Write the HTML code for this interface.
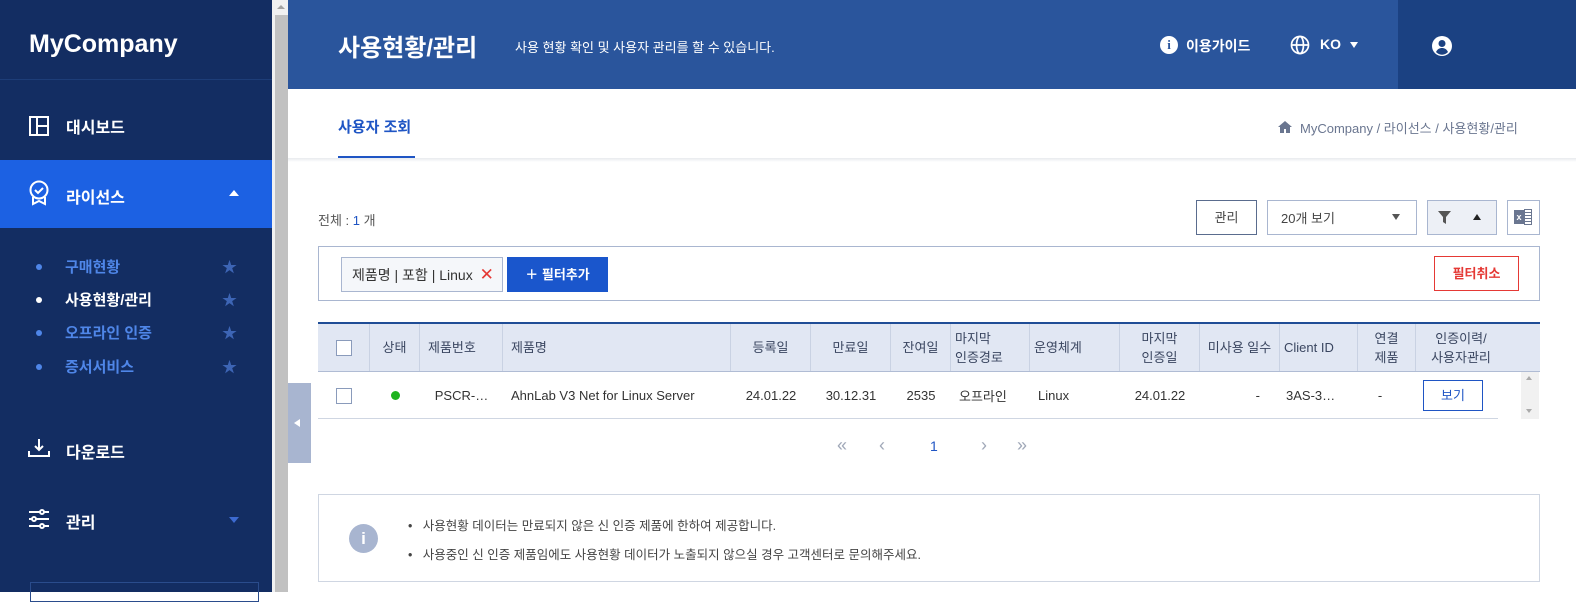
<!DOCTYPE html>
<html><head><meta charset="utf-8"><style>
*{box-sizing:border-box;margin:0;padding:0}
body{width:1576px;height:592px;overflow:hidden;position:relative;background:#fff;font-family:"Liberation Sans","Noto Sans CJK KR",sans-serif;color:#333}
.abs{position:absolute}
#side{left:0;top:0;width:272px;height:592px;background:#132d62}
.logo{left:29px;top:30px;font-size:25px;font-weight:bold;color:#fff}
.menu{color:#fff;font-size:16px;font-weight:bold}
.sub{font-size:15px;font-weight:bold;color:#4f86e8}
.dot{width:6px;height:6px;border-radius:50%;background:#4f86e8}
.star{color:#3d65b5;font-size:15px}
.th{position:absolute;top:0;height:47px;display:flex;align-items:center;justify-content:center;text-align:center;font-size:13px;color:#3a4660;line-height:19px;border-right:1px solid #c9d2e3}
.td{position:absolute;top:0;height:47px;display:flex;align-items:center;justify-content:center;font-size:13px;color:#333}
</style></head><body>
<div id="side" class="abs">
 <div class="abs logo">MyCompany</div>
 <div class="abs" style="left:0;top:79px;width:272px;height:1px;background:#1d3d78"></div>
 <svg class="abs" style="left:29px;top:116px" width="20" height="20" viewBox="0 0 20 20" fill="none" stroke="#fff" stroke-width="2"><rect x="1" y="1" width="18" height="18"/><path d="M8 1v18M8 10h11"/></svg>
 <div class="abs menu" style="left:66px;top:114px">대시보드</div>
 <div class="abs" style="left:0;top:160px;width:272px;height:68px;background:#1c61e3"></div>
 <svg class="abs" style="left:28px;top:180px" width="22" height="26" viewBox="0 0 22 26" fill="none" stroke="#fff" stroke-width="2"><circle cx="11" cy="10" r="8.5"/><path d="M7 10l3 3 5-5M5 17v7l6-3 6 3v-7"/></svg>
 <div class="abs menu" style="left:66px;top:184px">라이선스</div>
 <div class="abs" style="left:229px;top:190px;width:0;height:0;border-left:5px solid transparent;border-right:5px solid transparent;border-bottom:6px solid #fff"></div>
 <div class="abs dot" style="left:36px;top:264px"></div><div class="abs sub" style="left:65px;top:256px">구매현황</div><div class="abs star" style="left:222px;top:256px">★</div>
 <div class="abs dot" style="left:36px;top:297px;background:#fff"></div><div class="abs sub" style="left:65px;top:289px;color:#fff">사용현황/관리</div><div class="abs star" style="left:222px;top:289px">★</div>
 <div class="abs dot" style="left:36px;top:330px"></div><div class="abs sub" style="left:65px;top:322px">오프라인 인증</div><div class="abs star" style="left:222px;top:322px">★</div>
 <div class="abs dot" style="left:36px;top:364px"></div><div class="abs sub" style="left:65px;top:356px">증서서비스</div><div class="abs star" style="left:222px;top:356px">★</div>
 <svg class="abs" style="left:28px;top:438px" width="22" height="20" viewBox="0 0 22 20" fill="none" stroke="#fff" stroke-width="2"><path d="M11 1v11M7 8l4 4 4-4M1 13v5h20v-5"/></svg>
 <div class="abs menu" style="left:66px;top:439px">다운로드</div>
 <svg class="abs" style="left:28px;top:509px" width="22" height="20" viewBox="0 0 22 20" fill="none" stroke="#fff" stroke-width="2"><path d="M1 3h20M1 10h20M1 17h20"/><circle cx="14" cy="3" r="2" fill="#132d62"/><circle cx="6" cy="10" r="2" fill="#132d62"/><circle cx="14" cy="17" r="2" fill="#132d62"/></svg>
 <div class="abs menu" style="left:66px;top:509px">관리</div>
 <div class="abs" style="left:229px;top:517px;border-left:5px solid transparent;border-right:5px solid transparent;border-top:6px solid #3d6ad0"></div>
 <div class="abs" style="left:30px;top:582px;width:229px;height:20px;border:1px solid #2a4c8c"></div>
</div>
<div class="abs" style="left:272px;top:0;width:16px;height:592px;background:#f1f1f1"></div>
<div class="abs" style="left:275px;top:15px;width:13px;height:577px;background:#c1c1c1"></div>
<div class="abs" style="left:277px;top:5px;border-left:4px solid transparent;border-right:4px solid transparent;border-bottom:4px solid #a3a3a3"></div>
<div class="abs" style="left:288px;top:0;width:1110px;height:89px;background:#2a559c"></div>
<div class="abs" style="left:1398px;top:0;width:178px;height:89px;background:#1b4182"></div>
<div class="abs" style="left:338px;top:28px;font-size:24px;font-weight:bold;color:#fff">사용현황/관리</div>
<div class="abs" style="left:515px;top:37px;font-size:13px;color:#fff">사용 현황 확인 및 사용자 관리를 할 수 있습니다.</div>
<div class="abs" style="left:1160px;top:36px;width:18px;height:18px;border-radius:50%;background:#fff;color:#2a559c;font-size:13px;font-weight:bold;text-align:center;line-height:18px;font-family:'Liberation Serif',serif">i</div>
<div class="abs" style="left:1186px;top:36px;font-size:14px;font-weight:bold;color:#fff">이용가이드</div>
<svg class="abs" style="left:1290px;top:35px" width="20" height="20" viewBox="0 0 20 20" fill="none" stroke="#fff" stroke-width="1.7"><circle cx="10" cy="10" r="8.5"/><ellipse cx="10" cy="10" rx="3.5" ry="8.5"/><path d="M1.5 10h17"/></svg>
<div class="abs" style="left:1320px;top:36px;font-size:14px;font-weight:bold;color:#fff">KO</div>
<div class="abs" style="left:1350px;top:42px;border-left:4px solid transparent;border-right:4px solid transparent;border-top:6px solid #fff"></div>
<svg class="abs" style="left:1432px;top:36px" width="20" height="20" viewBox="0 0 20 20"><circle cx="10" cy="10" r="10" fill="#fff"/><circle cx="10" cy="7.5" r="3.5" fill="#1b4182"/><path d="M4 16c1.5-3 3.5-4 6-4s4.5 1 6 4a8 8 0 0 1-12 0z" fill="#1b4182"/></svg>
<div class="abs" style="left:288px;top:158px;width:1288px;height:4px;background:linear-gradient(#e8eaee,#fff)"></div>
<div class="abs" style="left:338px;top:116px;font-size:15px;font-weight:bold;color:#1f55c4">사용자 조회</div>
<div class="abs" style="left:338px;top:156px;width:77px;height:2px;background:#1f55c4"></div>
<svg class="abs" style="left:1278px;top:121px" width="14" height="12" viewBox="0 0 14 12"><path d="M7 0L0 6h2v6h4V8h2v4h4V6h2z" fill="#6a7690"/></svg>
<div class="abs" style="left:1300px;top:118px;font-size:13px;color:#6a7690">MyCompany / 라이선스 / 사용현황/관리</div>
<div class="abs" style="left:318px;top:210px;font-size:13px;color:#555">전체 : <span style="color:#1f55c4">1</span> 개</div>
<div class="abs" style="left:1196px;top:200px;width:61px;height:35px;border:1px solid #5a6c8e;font-size:13px;color:#444;text-align:center;line-height:33px">관리</div>
<div class="abs" style="left:1267px;top:200px;width:150px;height:35px;border:1px solid #a9b6d0;font-size:13px;color:#444;padding-left:13px;line-height:35px">20개 보기</div>
<div class="abs" style="left:1392px;top:214px;border-left:4px solid transparent;border-right:4px solid transparent;border-top:6px solid #555"></div>
<div class="abs" style="left:1427px;top:200px;width:70px;height:35px;border:1px solid #a9b6d0;background:#edf0f6"></div>
<svg class="abs" style="left:1438px;top:211px" width="13" height="13" viewBox="0 0 13 13"><path d="M0 0h13L8 6v7L5 11V6z" fill="#555"/></svg>
<div class="abs" style="left:1473px;top:214px;border-left:4px solid transparent;border-right:4px solid transparent;border-bottom:6px solid #222"></div>
<div class="abs" style="left:1507px;top:200px;width:33px;height:35px;border:1px solid #a9b6d0"></div>
<div class="abs" style="left:1514px;top:210px;width:10px;height:14px;background:#6a7690;color:#fff;font-size:9px;font-weight:bold;line-height:14px;text-align:center">x</div>
<div class="abs" style="left:1524px;top:209px;width:8px;height:16px;border:1px solid #6a7690;background:repeating-linear-gradient(#fff 0 2px,#6a7690 2px 3px)"></div>
<div class="abs" style="left:318px;top:246px;width:1222px;height:55px;border:1px solid #a9b6d0"></div>
<div class="abs" style="left:341px;top:257px;width:162px;height:35px;border:1px solid #a9b6d0;background:#f5f7fa;font-size:14px;color:#333;line-height:33px;padding-left:10px">제품명 | 포함 | Linux <span style="color:#e53935;font-size:17px;margin-left:3px">✕</span></div>
<div class="abs" style="left:507px;top:257px;width:101px;height:35px;background:#1a56cc;color:#fff;font-size:13px;font-weight:bold;text-align:center;line-height:35px">＋ 필터추가</div>
<div class="abs" style="left:1434px;top:256px;width:85px;height:35px;border:1px solid #e53935;color:#e53935;font-size:13px;font-weight:bold;text-align:center;line-height:33px">필터취소</div>
<div class="abs" style="left:288px;top:383px;width:23px;height:80px;background:#a8b5d0"></div>
<div class="abs" style="left:294px;top:419px;border-top:4px solid transparent;border-bottom:4px solid transparent;border-right:6px solid #fff"></div>
<div class="abs" style="left:318px;top:322px;width:1222px;height:2px;background:#1f4d96"></div>
<div class="abs" style="left:318px;top:324px;width:1222px;height:48px;background:#e1e7f3;border-bottom:1px solid #b0bcd4">
 <div class="th" style="left:0;width:52px"><div style="width:16px;height:16px;border:1px solid #8a9bbb;background:#fff"></div></div>
 <div class="th" style="left:52px;width:50px">상태</div>
 <div class="th" style="left:102px;width:83px;justify-content:flex-start;padding-left:8px">제품번호</div>
 <div class="th" style="left:185px;width:228px;justify-content:flex-start;padding-left:8px">제품명</div>
 <div class="th" style="left:413px;width:80px">등록일</div>
 <div class="th" style="left:493px;width:80px">만료일</div>
 <div class="th" style="left:573px;width:60px">잔여일</div>
 <div class="th" style="left:633px;width:79px;justify-content:flex-start;padding-left:4px;text-align:left">마지막<br>인증경로</div>
 <div class="th" style="left:712px;width:90px;justify-content:flex-start;padding-left:4px">운영체계</div>
 <div class="th" style="left:802px;width:80px">마지막<br>인증일</div>
 <div class="th" style="left:882px;width:80px">미사용 일수</div>
 <div class="th" style="left:962px;width:78px;justify-content:flex-start;padding-left:4px">Client ID</div>
 <div class="th" style="left:1040px;width:58px">연결<br>제품</div>
 <div class="th" style="left:1098px;width:90px;border-right:none">인증이력/<br>사용자관리</div>
</div>
<div class="abs" style="left:318px;top:372px;width:1180px;height:47px;border-bottom:1px solid #cfd6e2">
 <div class="td" style="left:0;width:52px"><div style="width:16px;height:16px;border:1px solid #8a9bbb"></div></div>
 <div class="td" style="left:52px;width:50px"><div style="width:9px;height:9px;border-radius:50%;background:#1fb31f"></div></div>
 <div class="td" style="left:102px;width:83px">PSCR-…</div>
 <div class="td" style="left:185px;width:228px;justify-content:flex-start;padding-left:8px">AhnLab V3 Net for Linux Server</div>
 <div class="td" style="left:413px;width:80px">24.01.22</div>
 <div class="td" style="left:493px;width:80px">30.12.31</div>
 <div class="td" style="left:573px;width:60px">2535</div>
 <div class="td" style="left:633px;width:79px;justify-content:flex-start;padding-left:8px">오프라인</div>
 <div class="td" style="left:712px;width:90px;justify-content:flex-start;padding-left:8px">Linux</div>
 <div class="td" style="left:802px;width:80px">24.01.22</div>
 <div class="td" style="left:882px;width:80px;justify-content:flex-end;padding-right:20px">-</div>
 <div class="td" style="left:962px;width:78px;justify-content:flex-start;padding-left:6px">3AS-3…</div>
 <div class="td" style="left:1040px;width:44px">-</div>
 <div class="td" style="left:1105px;width:60px"><div style="width:60px;height:31px;border:1px solid #1f55c4;color:#1f55c4;text-align:center;line-height:29px">보기</div></div>
</div>
<div class="abs" style="left:1521px;top:372px;width:18px;height:47px;background:#f1f1f1"></div>
<div class="abs" style="left:1526px;top:376px;border-left:3px solid transparent;border-right:3px solid transparent;border-bottom:4px solid #aaa"></div>
<div class="abs" style="left:1526px;top:409px;border-left:3px solid transparent;border-right:3px solid transparent;border-top:4px solid #aaa"></div>
<div class="abs" style="left:837px;top:435px;font-size:18px;color:#a0a8b8">«</div>
<div class="abs" style="left:879px;top:435px;font-size:18px;color:#a0a8b8">‹</div>
<div class="abs" style="left:930px;top:438px;font-size:14px;color:#1f55c4">1</div>
<div class="abs" style="left:981px;top:435px;font-size:18px;color:#a0a8b8">›</div>
<div class="abs" style="left:1017px;top:435px;font-size:18px;color:#a0a8b8">»</div>
<div class="abs" style="left:318px;top:494px;width:1222px;height:88px;border:1px solid #cfd6e2"></div>
<div class="abs" style="left:349px;top:524px;width:29px;height:29px;border-radius:50%;background:#a8b5d0;color:#fff;font-size:17px;font-weight:bold;text-align:center;line-height:29px">i</div>
<div class="abs" style="left:408px;top:515px;font-size:12.5px;color:#444">•&nbsp;&nbsp; 사용현황 데이터는 만료되지 않은 신 인증 제품에 한하여 제공합니다.</div>
<div class="abs" style="left:408px;top:544px;font-size:12.5px;color:#444">•&nbsp;&nbsp; 사용중인 신 인증 제품임에도 사용현황 데이터가 노출되지 않으실 경우 고객센터로 문의해주세요.</div>
</body></html>
